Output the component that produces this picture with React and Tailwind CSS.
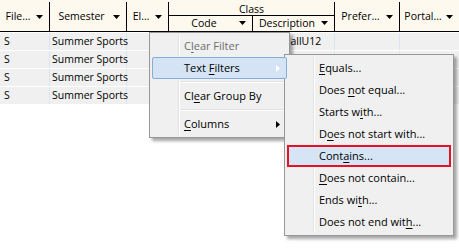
import React from "react";

const FONT = { fontFamily: '"Segoe UI", "Open Sans", "Noto Sans", sans-serif' };

function Arrow() {
  return (
    <svg width="7" height="4" viewBox="0 0 7 4" className="shrink-0 mr-[6px]">
      <polygon points="0,0 7,0 3.5,4" fill="#000" />
    </svg>
  );
}

function HeadCell({ label, className, pad = "px-[2px]" }) {
  return (
    <div className={`flex items-center h-full ${className}`}>
      <div className={`flex-1 min-w-0 text-center whitespace-nowrap overflow-hidden ${pad}`}>{label}</div>
      <Arrow />
    </div>
  );
}

function Mn({ text, i }) {
  return (
    <span>
      {text.slice(0, i)}
      <span className="underline underline-offset-[2px]">{text[i]}</span>
      {text.slice(i + 1)}
    </span>
  );
}

function RightArrow({ color }) {
  return (
    <svg width="4" height="7" viewBox="0 0 4 7" className="shrink-0">
      <polygon points="0,0 4,3.5 0,7" fill={color} />
    </svg>
  );
}

function MenuItem({ text, i, disabled, highlight, arrow, annotated }) {
  let box = "border border-transparent";
  if (highlight) box = "border border-[#84acdd] bg-[#d4e4f5] rounded-[2px]";
  if (annotated) box = "border-2 border-[#e81123] bg-[#d5e5f6]";
  return (
    <div className={`relative z-10 flex items-center h-[22px] ${box}`}>
      <div className={annotated ? "w-[30px] shrink-0" : "w-[31px] shrink-0"} />
      <div className={`flex-1 whitespace-nowrap ${disabled ? "text-[#6d6d6d]" : "text-black"}`}>
        <Mn text={text} i={i} />
      </div>
      {arrow && (
        <div className="mr-[6px] flex items-center">
          <RightArrow color={highlight ? "#ffffff" : "#000000"} />
        </div>
      )}
    </div>
  );
}

function Separator() {
  return (
    <div className="h-[6px] flex flex-col justify-center pl-[29px]">
      <div className="h-px bg-[#e0e0e0]" />
      <div className="h-px bg-white" />
    </div>
  );
}

function Menu({ className, children }) {
  return (
    <div
      className={`absolute bg-[#f0f0f0] border border-[#979797] p-[2px] text-[11px] shadow-[3px_3px_3px_rgba(0,0,0,0.35)] ${className}`}
    >
      <div className="absolute left-[28px] top-[2px] bottom-[2px] w-[2px] flex">
        <div className="w-px bg-[#e2e3e3]" />
        <div className="w-px bg-white" />
      </div>
      {children}
    </div>
  );
}

function Row({ first }) {
  const line = "border-r border-[#d8e5f4]";
  return (
    <div className="flex h-[18px] border-b border-white bg-[#f0f0f0] items-center">
      <div className={`w-[50px] h-full flex items-center pl-[4px] ${line}`}>S</div>
      <div className={`w-[77px] h-full flex items-center pl-[2px] whitespace-nowrap ${line}`}>Summer Sports</div>
      <div className={`w-[42px] h-full ${line}`} />
      <div className={`w-[84px] h-full ${line}`} />
      <div className={`w-[82px] h-full flex items-center pl-[2px] whitespace-nowrap overflow-hidden ${line}`}>
        {first ? "VolleyballU12" : ""}
      </div>
      <div className={`w-[65px] h-full ${line}`} />
      <div className="flex-1 h-full" />
    </div>
  );
}

export default function App() {
  return (
    <div className="relative w-[459px] h-[252px] bg-white overflow-hidden text-black" style={FONT}>
      {/* header */}
      <div className="flex h-[32px] pt-[2px] bg-[#fdf9ee] border-b border-black text-[10.5px]">
        <HeadCell label="File…" className="w-[50px] border-r border-black" />
        <HeadCell label="Semester" className="w-[77px] border-r border-black" />
        <HeadCell label="El…" className="w-[42px] border-r border-black" pad="px-0" />
        <div className="w-[166px] flex flex-col border-r border-black">
          <div className="h-[14px] border-b border-black flex items-center justify-center leading-none pt-[2px]">Class</div>
          <div className="flex flex-1">
            <HeadCell label="Code" className="w-[84px] border-r border-black" />
            <HeadCell label="Description" className="flex-1" />
          </div>
        </div>
        <HeadCell label="Prefer…" className="w-[65px] border-r border-black" />
        <HeadCell label="Portal…" className="flex-1" pad="px-0" />
      </div>
      {/* rows */}
      <div className="pt-px text-[10.5px]">
        <Row first />
        <Row />
        <Row />
        <Row />
      </div>

      {/* context menu */}
      <Menu className="left-[149px] top-[32px] w-[141px]">
        <MenuItem text="Clear Filter" i={1} disabled />
        <MenuItem text="Text Filters" i={5} highlight arrow />
        <Separator />
        <MenuItem text="Clear Group By" i={2} />
        <Separator />
        <MenuItem text="Columns" i={0} arrow />
      </Menu>

      {/* submenu */}
      <Menu className="left-[284px] top-[54px] w-[170px]">
        <MenuItem text="Equals..." i={0} />
        <MenuItem text="Does not equal..." i={5} />
        <MenuItem text="Starts with..." i={8} />
        <MenuItem text="Does not start with..." i={1} />
        <MenuItem text="Contains..." i={4} annotated />
        <MenuItem text="Does not contain..." i={0} />
        <MenuItem text="Ends with..." i={7} />
        <MenuItem text="Does not end with..." i={16} />
      </Menu>
    </div>
  );
}
